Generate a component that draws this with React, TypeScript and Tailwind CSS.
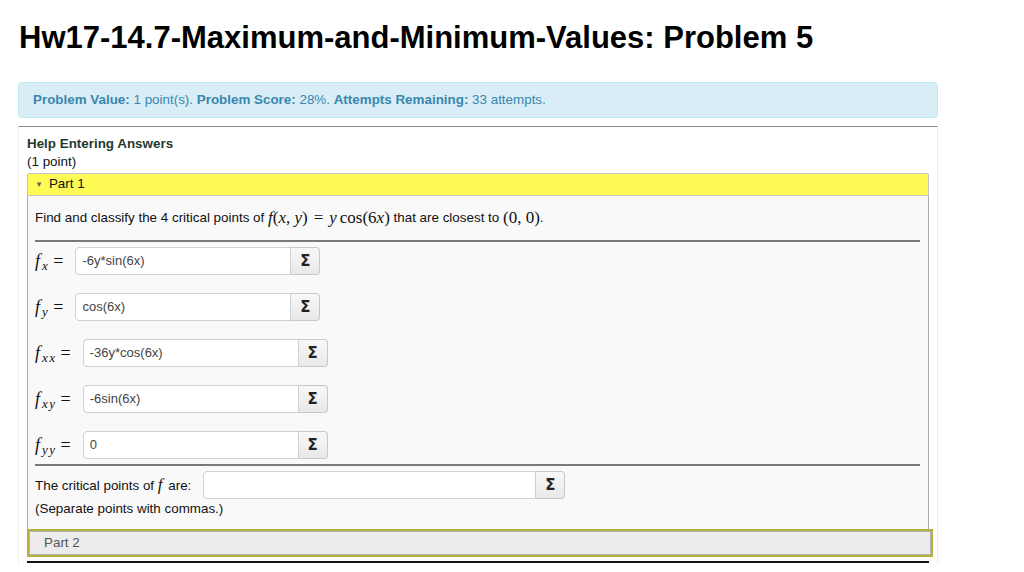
import React from 'react';

const Sigma: React.FC = () => (
  <button className="h-full w-[29px] flex items-center justify-center bg-gradient-to-b from-[#f8f8f8] to-[#e8e8e8] border border-l-0 border-[#c8c8c8] rounded-r-[4px] text-[15px] font-bold text-[#222] font-['DejaVu_Sans',sans-serif]">
    Σ
  </button>
);

const AnswerBox: React.FC<{ value: string; width: string }> = ({ value, width }) => (
  <div className="flex h-[28px]">
    <div className={`${width} h-full bg-white border border-[#cfcfcf] rounded-l-[4px] flex items-center pl-[6px] text-[13px] text-[#444]`}>
      {value}
    </div>
    <Sigma />
  </div>
);

const Deriv: React.FC<{ sub: string }> = ({ sub }) => (
  <span className="font-['Liberation_Serif',serif] text-[18px] text-[#111] whitespace-nowrap">
    <i>f</i>
    <i className="text-[13px] relative top-[3px] ml-[2px] tracking-[1.5px]">{sub}</i>
    <span className="ml-[4px]">=</span>
  </span>
);

const Row: React.FC<{ sub: string; value: string }> = ({ sub, value }) => (
  <div className="flex items-center gap-[12px] h-[28px]">
    <Deriv sub={sub} />
    <AnswerBox value={value} width="w-[216px]" />
  </div>
);

const App: React.FC = () => {
  const rows = [
    { sub: 'x', value: '-6y*sin(6x)' },
    { sub: 'y', value: 'cos(6x)' },
    { sub: 'xx', value: '-36y*cos(6x)' },
    { sub: 'xy', value: '-6sin(6x)' },
    { sub: 'yy', value: '0' },
  ];

  return (
    <div className="w-[1024px] h-[572px] overflow-hidden bg-white font-['Liberation_Sans',Arial,sans-serif] text-[13.4px] text-[#111]">
      <div className="pl-[18px] w-[938px]">
        {/* Title */}
        <h1 className="pt-[20px] pl-[1px] text-[31px] leading-[36px] font-bold text-black">
          Hw17-14.7-Maximum-and-Minimum-Values: Problem 5
        </h1>

        {/* Problem info */}
        <div className="mt-[26px] h-[36px] bg-[#d9edf7] border border-[#bce8f1] rounded-[4px] flex items-center pl-[14px] text-[#3a87ad]">
          <span>
            <b>Problem Value:</b> 1 point(s). <b>Problem Score:</b> 28%. <b>Attempts Remaining:</b> 33 attempts.
          </span>
        </div>

        {/* Problem body */}
        <div className="mt-[8px] border-t border-[#8a8a8a] border-x border-x-[#eeeeee] px-[8px]">
          <div className="pt-[8px] font-bold text-[#1f3a30] leading-[18px]">Help Entering Answers</div>
          <div className="leading-[18px]">(1 point)</div>

          {/* Part 1 */}
          <div className="mt-[2px] h-[23px] bg-[#fffb55] border border-[#c4c4c4] rounded-t-[2px] flex items-center pl-[7px] gap-[6px]">
            <span className="text-[8px] text-[#666]">▼</span>
            <span>Part 1</span>
          </div>
          <div className="bg-[#f9f9f9] border-x border-[#ababab] px-[7px] pt-[13px] pb-[12px]">
            <div className="leading-[18px] flex items-center">
              <span>Find and classify the 4 critical points of&nbsp;</span>
              <span className="font-['Liberation_Serif',serif] text-[17px] whitespace-nowrap">
                <i>f</i>(<i>x</i>,&nbsp;<i>y</i>)<span className="mx-[6px]">=</span><i className="mr-[3px]">y</i>cos(6<i>x</i>)
              </span>
              <span>&nbsp;that are closest to&nbsp;</span>
              <span className="font-['Liberation_Serif',serif] text-[17px]">(0,&nbsp;0)</span>
              <span>.</span>
            </div>

            <div className="mt-[13px] mr-[1px] border-t-2 border-[#7a7a7a]" />

            <div className="mt-[5px] flex flex-col gap-[18px]">
              {rows.map((r) => (
                <Row key={r.sub + r.value} sub={r.sub} value={r.value} />
              ))}
            </div>

            <div className="mt-[5px] mr-[1px] border-t-2 border-[#7a7a7a]" />

            <div className="mt-[5px] flex items-center">
              <span className="whitespace-nowrap">
                The critical points of <i className="font-['Liberation_Serif',serif] text-[17px] mr-[2px]">f</i> are:
              </span>
              <div className="ml-[12px]">
                <AnswerBox value="" width="w-[333px]" />
              </div>
            </div>
            <div className="mt-[2px] leading-[16px]">(Separate points with commas.)</div>
          </div>

          {/* Part 2 */}
          <div className="w-[906px] h-[28px] border-2 border-[#b3b03c]">
            <div className="h-full bg-[#ececec] border border-[#b5b5b5] flex items-center pl-[14px] text-[#555]">
              Part 2
            </div>
          </div>
          <div className="mt-[4px] border-t-2 border-[#111]" />
        </div>
      </div>
    </div>
  );
};

export default App;
